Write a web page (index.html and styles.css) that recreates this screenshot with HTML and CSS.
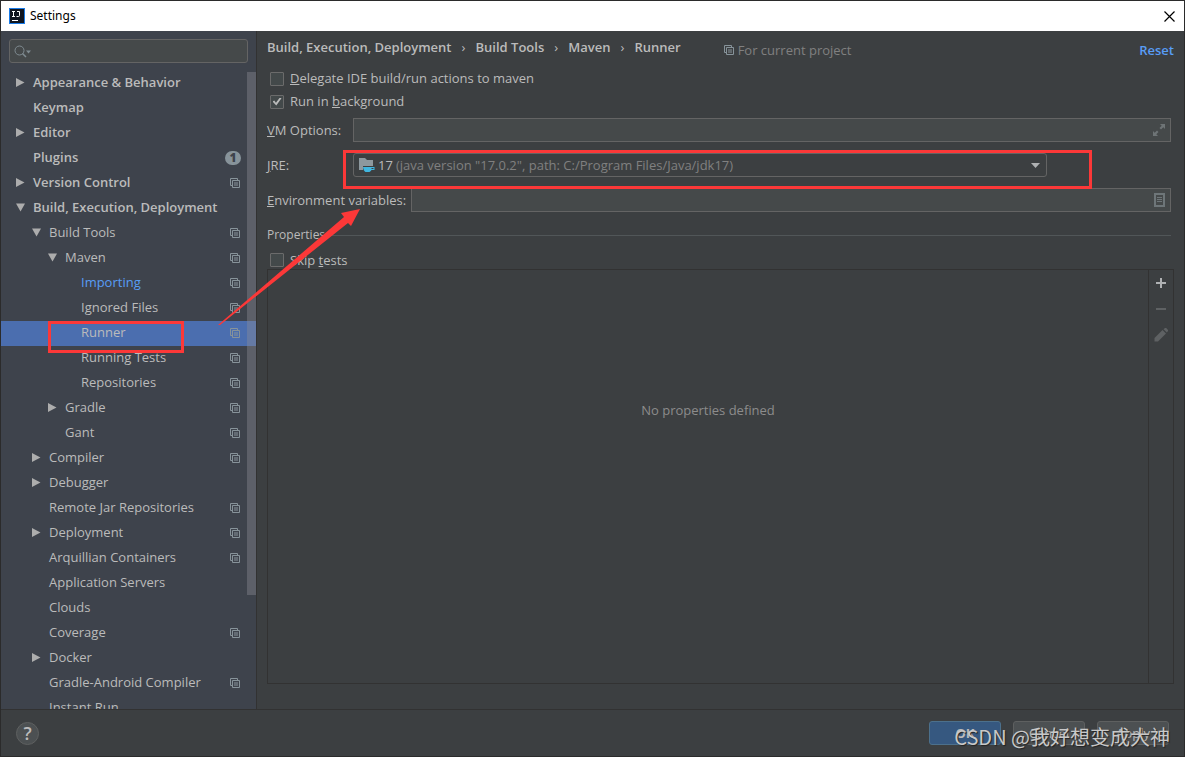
FILE: index.html
```html
<!DOCTYPE html>
<html lang="en">
<head>
    <meta charset="UTF-8">
    <title>Settings</title>
    <link rel="stylesheet" href="styles.css">
</head>
<body>
    <!-- shared icons -->
    <svg class="sprite" width="0" height="0" aria-hidden="true">
        <symbol id="copy" viewBox="0 0 10 10">
            <path d="M2 7.5H.5V.5H7.5V2M2.5 2.5H9.5V9.5H2.5ZM4 5H8M4 7H8" fill="none" stroke="currentColor"/>
        </symbol>
        <symbol id="right" viewBox="0 0 9 9">
            <path d="M0 0L8.500 4.500L0 9Z" fill="currentColor"/>
        </symbol>
        <symbol id="down" viewBox="0 0 9 9">
            <path d="M0 .5H9L4.500 8.500Z" fill="currentColor"/>
        </symbol>
    </svg>

    <div class="window">
        <header class="titlebar">
            <svg class="logo" width="16" height="16" viewBox="0 0 16 16">
                <rect width="16" height="16" fill="#1b7ce8"/>
                <rect x="1" y="1" width="14" height="14" fill="#10151f"/>
                <path d="M3 3.500H6M4.500 3.500V8.500M3 8.500H6M8 3.500H10.500V7.500Q10.500 8.500 9.500 8.500H7.500" fill="none" stroke="#fff"/>
                <rect x="3" y="12" width="6" height="1" fill="#fff"/>
            </svg>
            <h1>Settings</h1>
            <button class="close" aria-label="Close">
                <svg width="11" height="11" viewBox="0 0 11 11"><path d="M.5 .5L10.500 10.500M10.500 .5L.5 10.500" stroke="#000" stroke-width="1.200"/></svg>
            </button>
        </header>

        <div class="body">
            <nav class="sidebar">
                <div class="search">
                    <svg width="17" height="13" viewBox="0 0 17 13">
                        <circle cx="5.500" cy="5.500" r="4.500" fill="none" stroke="#7f8b91"/>
                        <path d="M8.500 8.500L12 12" stroke="#7f8b91" stroke-width="1.500"/>
                        <path d="M12 5.500H17L14.500 8.500Z" fill="#7f8b91"/>
                    </svg>
                    <input type="text" aria-label="Search settings">
                </div>
                <div class="tree-wrap">
                    <ul class="tree">
                        <li class="bold"><svg class="arrow"><use href="#right"/></svg><span>Appearance &amp; Behavior</span></li>
                        <li class="bold"><span>Keymap</span></li>
                        <li class="bold"><svg class="arrow"><use href="#right"/></svg><span>Editor</span></li>
                        <li class="bold"><span>Plugins</span><b class="badge">1</b></li>
                        <li class="bold"><svg class="arrow"><use href="#right"/></svg><span>Version Control</span><svg class="copy"><use href="#copy"/></svg></li>
                        <li class="bold"><svg class="arrow"><use href="#down"/></svg><span>Build, Execution, Deployment</span></li>
                        <li class="l1"><svg class="arrow"><use href="#down"/></svg><span>Build Tools</span><svg class="copy"><use href="#copy"/></svg></li>
                        <li class="l2"><svg class="arrow"><use href="#down"/></svg><span>Maven</span><svg class="copy"><use href="#copy"/></svg></li>
                        <li class="l3 changed"><span>Importing</span><svg class="copy"><use href="#copy"/></svg></li>
                        <li class="l3"><span>Ignored Files</span><svg class="copy"><use href="#copy"/></svg></li>
                        <li class="l3 selected"><span>Runner</span><svg class="copy"><use href="#copy"/></svg></li>
                        <li class="l3"><span>Running Tests</span><svg class="copy"><use href="#copy"/></svg></li>
                        <li class="l3"><span>Repositories</span><svg class="copy"><use href="#copy"/></svg></li>
                        <li class="l2"><svg class="arrow"><use href="#right"/></svg><span>Gradle</span><svg class="copy"><use href="#copy"/></svg></li>
                        <li class="l2"><span>Gant</span><svg class="copy"><use href="#copy"/></svg></li>
                        <li class="l1"><svg class="arrow"><use href="#right"/></svg><span>Compiler</span><svg class="copy"><use href="#copy"/></svg></li>
                        <li class="l1"><svg class="arrow"><use href="#right"/></svg><span>Debugger</span></li>
                        <li class="l1"><span>Remote Jar Repositories</span><svg class="copy"><use href="#copy"/></svg></li>
                        <li class="l1"><svg class="arrow"><use href="#right"/></svg><span>Deployment</span><svg class="copy"><use href="#copy"/></svg></li>
                        <li class="l1"><span>Arquillian Containers</span><svg class="copy"><use href="#copy"/></svg></li>
                        <li class="l1"><span>Application Servers</span></li>
                        <li class="l1"><span>Clouds</span></li>
                        <li class="l1"><span>Coverage</span><svg class="copy"><use href="#copy"/></svg></li>
                        <li class="l1"><svg class="arrow"><use href="#right"/></svg><span>Docker</span></li>
                        <li class="l1"><span>Gradle-Android Compiler</span><svg class="copy"><use href="#copy"/></svg></li>
                        <li class="l1"><span>Instant Run</span></li>
                    </ul>
                    <div class="scrollbar"></div>
                </div>
            </nav>

            <main class="content">
                <div class="top">
                    <div class="crumbs">
                        <span>Build, Execution, Deployment</span><i>›</i><span>Build Tools</span><i>›</i><span>Maven</span><i>›</i><span>Runner</span>
                    </div>
                    <div class="scope"><svg class="copy"><use href="#copy"/></svg>For current project</div>
                    <a class="reset" href="#">Reset</a>
                </div>

                <div class="check">
                    <input type="checkbox" id="delegate">
                    <label for="delegate"><u>D</u>elegate IDE build/run actions to maven</label>
                </div>
                <div class="check">
                    <input type="checkbox" id="background" checked>
                    <label for="background">Run in <u>b</u>ackground</label>
                </div>

                <div class="row">
                    <label class="short" for="vm"><u>V</u>M Options:</label>
                    <div class="field">
                        <input type="text" id="vm">
                        <button aria-label="Expand">
                            <svg width="12" height="12" viewBox="0 0 12 12"><path d="M7 0H12V5L10.300 3.300L8 5.600L6.500 4L8.700 1.700ZM0 7L1.700 8.700L4 6.500L5.500 8L3.300 10.300L5 12H0Z" fill="#6e7476"/></svg>
                        </button>
                    </div>
                </div>
                <div class="row">
                    <label class="short" for="jre"><u>J</u>RE:</label>
                    <div class="combo">
                        <svg width="16" height="14" viewBox="0 0 16 14">
                            <path d="M0 0H6L8 2H14V8H4V12H0Z" fill="#8d989e"/>
                            <path d="M4 9H15.500V12H12.500Q12 13 10.500 14H6.500Q4.500 13 4 9Z" fill="#40b6e0"/>
                            <path d="M12.500 10H14.500V11H12.500Z" fill="#3c3f41"/>
                        </svg>
                        <span>17</span>
                        <select id="jre">
                            <option>(java version "17.0.2", path: C:/Program Files/Java/jdk17)</option>
                        </select>
                        <svg class="caret" width="9" height="5" viewBox="0 0 9 5"><path d="M0 0H9L4.500 5Z" fill="#afb1b3"/></svg>
                    </div>
                </div>
                <div class="row">
                    <label class="long" for="env"><u>E</u>nvironment variables:</label>
                    <div class="field">
                        <input type="text" id="env">
                        <button aria-label="Edit variables">
                            <svg width="11" height="14" viewBox="0 0 11 14"><path d="M1 1H10V13H1Z" fill="none" stroke="#6e7679" stroke-width="2"/><path d="M3 4.500H8M3 6.500H8M3 8.500H8" stroke="#6e7679"/></svg>
                        </button>
                    </div>
                </div>

                <h2>Properties</h2>
                <div class="check skip">
                    <input type="checkbox" id="skip">
                    <label for="skip">Skip <u>t</u>ests</label>
                </div>
                <section class="props">
                    <div class="empty">No properties defined</div>
                    <div class="tools">
                        <button aria-label="Add"><svg width="14" height="14" viewBox="0 0 14 14"><path d="M2 7H12M7 2V12" stroke="#afb1b3" stroke-width="2"/></svg></button>
                        <button aria-label="Remove" disabled><svg width="14" height="14" viewBox="0 0 14 14"><path d="M2 7H12" stroke="#5e6163" stroke-width="2"/></svg></button>
                        <button aria-label="Edit" disabled><svg width="14" height="14" viewBox="0 0 14 14"><path d="M.5 10L8.500 2L12 5.500L4 13.500H.5ZM9.500 1.200L11 0H12.200L14 2V3L12.800 4.500Z" fill="#5e6163"/></svg></button>
                    </div>
                </section>
            </main>
        </div>

        <footer class="footer">
            <button class="help" aria-label="Help">?</button>
            <button class="btn primary">OK</button>
            <button class="btn">Cancel</button>
            <button class="btn">Apply</button>
        </footer>

        <!-- annotations over the window -->
        <div class="mark mark-runner"></div>
        <div class="mark mark-jre"></div>
        <svg class="pointer" width="144" height="118" viewBox="0 0 144 118">
            <path d="M0 116L126 8L123 4L142 0L133 17L130 14L2 116Z" fill="#fc3838"/>
        </svg>
        <div class="watermark">CSDN @我好想变成大神</div>
    </div>
</body>
</html>
```
FILE: styles.css
```css
* {
    box-sizing: border-box;
}
body {
    margin: 0;
    font-family: "Open Sans", "Noto Sans", sans-serif;
    font-size: 13px;
    line-height: 18px;
    color: #bbbbbb;
    background: #3c3f41;
}
button, input, select {
    font: inherit;
    color: inherit;
}
button {
    padding: 0;
    border: none;
    background: none;
}
svg {
    display: block;
    flex: none;
}
.sprite {
    position: absolute;
}
.window {
    position: relative;
    display: flex;
    flex-direction: column;
    height: 100vh;
    border: 1px solid #2b2b2b;
    overflow: hidden;
}

/* title bar */
.titlebar {
    display: flex;
    align-items: center;
    height: 30px;
    padding: 0 9px 0 8px;
    background: #fff;
    color: #000;
}
.titlebar h1 {
    flex: 1;
    margin: 0 0 0 5px;
    font-family: "Noto Sans", sans-serif;
    font-size: 12px;
    font-weight: normal;
}
.body {
    display: flex;
    flex: 1;
    min-height: 0;
}

/* sidebar */
.sidebar {
    display: flex;
    flex-direction: column;
    width: 256px;
    padding-top: 8px;
    background: #3e434c;
    border-right: 1px solid #323232;
}
.search {
    display: flex;
    align-items: center;
    height: 24px;
    margin: 0 8px;
    padding-left: 4px;
    background: #45494a;
    border: 1px solid #646464;
    border-radius: 3px;
}
.search input {
    flex: 1;
    min-width: 0;
    border: none;
    background: none;
}
.tree-wrap {
    position: relative;
    flex: 1;
    min-height: 0;
    margin-top: 8px;
    overflow: hidden;
}
.tree {
    margin: 0;
    padding: 0;
    list-style: none;
}
.tree li {
    display: flex;
    align-items: center;
    height: 25px;
    padding: 0 16px 2px 32px;
}
.tree span {
    flex: 1;
    padding-bottom: 1px;
    white-space: nowrap;
}
.tree .bold {
    font-weight: 600;
}
.tree .l1 {
    padding-left: 48px;
}
.tree .l2 {
    padding-left: 64px;
}
.tree .l3 {
    padding-left: 80px;
}
.tree .changed span {
    color: #589df6;
}
.tree .selected {
    background: #4b6eaf;
}
.arrow {
    width: 9px;
    height: 9px;
    margin-left: -17px;
    margin-right: 8px;
    color: #adadad;
}
.copy {
    width: 10px;
    height: 10px;
    color: #87939a;
}
.badge {
    width: 16px;
    height: 14px;
    margin-right: -1px;
    border-radius: 7px;
    background: #87939a;
    color: #3e434c;
    font-size: 12px;
    line-height: 14px;
    text-align: center;
}
.scrollbar {
    position: absolute;
    top: 1px;
    right: 0;
    width: 9px;
    height: 82%;
    background: rgba(140, 140, 150, 0.4);
}

/* content */
.content {
    display: flex;
    flex-direction: column;
    flex: 1;
    min-width: 0;
    padding: 7px 10px 25px;
}
.top {
    display: flex;
    height: 29px;
}
.crumbs {
    display: flex;
    font-weight: 600;
}
.crumbs i {
    width: 24px;
    font-style: normal;
    font-weight: normal;
    text-align: center;
}
.scope {
    display: flex;
    align-items: center;
    gap: 4px;
    height: 24px;
    margin-left: 43px;
    color: #808080;
}
.reset {
    margin-left: auto;
    line-height: 24px;
    font-weight: 600;
    color: #589df6;
    text-decoration: none;
}
.check {
    display: flex;
    align-items: center;
    gap: 6px;
    height: 23px;
    padding-left: 3px;
}
.check label {
    padding-bottom: 1px;
}
.check input {
    appearance: none;
    display: grid;
    place-items: center;
    width: 14px;
    height: 14px;
    margin: 0;
    background: #43494a;
    border: 1px solid #6b6b6b;
    border-radius: 1px;
}
.check input:checked::before {
    content: "";
    width: 9px;
    height: 8px;
    background: #bbbbbb;
    clip-path: polygon(0 50%, 20% 38%, 38% 65%, 82% 0, 100% 10%, 42% 100%);
}
.row {
    display: flex;
    align-items: center;
    height: 24px;
    margin: 5px 3px 0 0;
}
.row + .row {
    margin-top: 11px;
}
.row label {
    padding-bottom: 1px;
    white-space: nowrap;
}
.row .short {
    width: 86px;
}
.row .long {
    width: 144px;
}
.field, .combo {
    display: flex;
    align-items: center;
    flex: 1;
    height: 24px;
    border: 1px solid #646464;
}
.field {
    padding-right: 5px;
    background: #45494a;
}
.field input {
    flex: 1;
    min-width: 0;
    border: none;
    background: none;
}
.combo {
    margin-right: 124px;
    padding: 0 6px 0 5px;
    gap: 3px;
    border-radius: 3px;
}
.combo select {
    appearance: none;
    flex: 1;
    min-width: 0;
    border: none;
    background: none;
    color: #808080;
}
h2 {
    display: flex;
    align-items: center;
    margin: 14px 3px 0 0;
    font-size: 12px;
    font-weight: normal;
}
h2::after {
    content: "";
    flex: 1;
    height: 1px;
    margin-left: 4px;
    background: #515658;
}
.skip {
    height: 18px;
    margin-top: 7px;
}
.props {
    display: flex;
    flex: 1;
    border: 1px solid #323232;
}
.empty {
    flex: 1;
    padding-top: 131px;
    text-align: center;
    color: #8c8c8c;
}
.tools {
    display: flex;
    flex-direction: column;
    align-items: center;
    gap: 12px;
    width: 25px;
    padding-top: 6px;
    border-left: 1px solid #323232;
}

/* footer */
.footer {
    display: flex;
    align-items: center;
    gap: 12px;
    height: 47px;
    padding: 0 15px;
    border-top: 1px solid #323232;
}
.help {
    width: 23px;
    height: 23px;
    margin-right: auto;
    border: 1px solid #5e6060;
    border-radius: 50%;
    background: #4c5052;
    font-size: 18px;
    font-weight: 600;
    line-height: 20px;
}
.btn {
    width: 72px;
    height: 24px;
    border: 1px solid #5e6060;
    border-radius: 3px;
    background: #4c5052;
}
.primary {
    border-color: #4c708c;
    background: #365880;
    font-weight: bold;
}

/* annotations */
.mark {
    position: absolute;
    border: 3px solid #fc3838;
}
.mark-runner {
    left: 47px;
    top: 320px;
    width: 136px;
    height: 32px;
}
.mark-jre {
    left: 342px;
    top: 149px;
    width: 749px;
    height: 39px;
}
.pointer {
    position: absolute;
    left: 217px;
    top: 208px;
}
.watermark {
    position: absolute;
    right: 14px;
    bottom: 4px;
    font-family: "Noto Sans CJK SC", sans-serif;
    font-size: 20px;
    line-height: 30px;
    color: #c8c8c8;
    text-shadow: 1px 1px 1px #222;
}
```
